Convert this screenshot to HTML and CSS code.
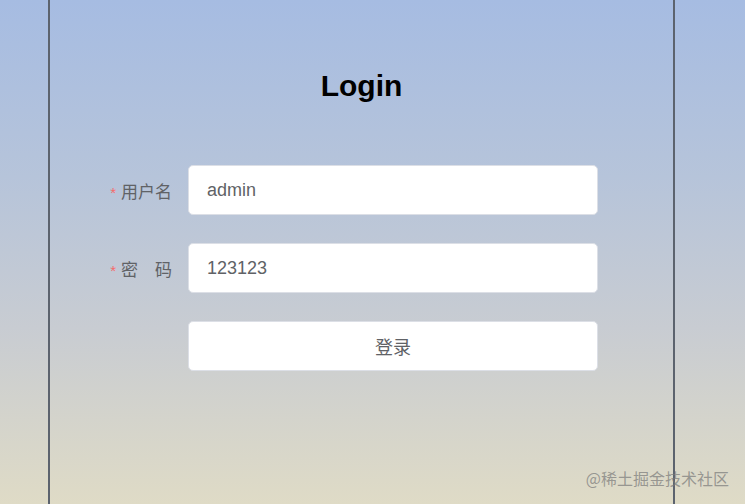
FILE: index.html
```html
<!DOCTYPE html>
<html lang="zh-CN">
<head>
    <meta charset="UTF-8">
    <meta name="viewport" content="width=device-width, initial-scale=1.0">
    <title>Login</title>
    <link rel="stylesheet" href="styles.css">
</head>
<body>
    <div class="login-box">
        <h1 class="login-title">Login</h1>
        <form class="login-form">
            <div class="form-item">
                <label class="form-label" for="username"><span class="required">*</span>用户名</label>
                <input class="form-input" id="username" type="text" value="admin">
            </div>
            <div class="form-item">
                <label class="form-label" for="password"><span class="required">*</span>密　码</label>
                <input class="form-input" id="password" type="text" value="123123">
            </div>
            <div class="form-item">
                <span class="form-label"></span>
                <button class="login-btn" type="button">登录</button>
            </div>
        </form>
    </div>

    <!-- Watermark -->
    <div class="watermark">@稀土掘金技术社区</div>
</body>
</html>
```

FILE: styles.css
```css
/* General Styles */
html, body {
    height: 100%;
}

body {
    margin: 0;
    font-family: "Liberation Sans", Arial, "Noto Sans CJK SC", sans-serif;
    background: linear-gradient(to bottom, #a6bce2 0%, #b6c4da 35%, #c8ccd2 65%, #dfdbc6 100%);
    overflow: hidden;
}

/* Login box */
.login-box {
    box-sizing: border-box;
    width: 627px;
    height: 100%;
    margin-left: 48px;
    border-left: 2px solid #5c636e;
    border-right: 2px solid #5c636e;
}

.login-title {
    margin: 0;
    padding-top: 69px;
    font-size: 30px;
    line-height: 34px;
    font-weight: bold;
    text-align: center;
    color: #000;
}

/* Form */
.login-form {
    margin-top: 62px;
    display: flex;
    flex-direction: column;
    gap: 28px;
}

.form-item {
    display: flex;
    align-items: center;
}

.form-label {
    box-sizing: border-box;
    width: 138px;
    padding-right: 16px;
    text-align: right;
    font-size: 17px;
    color: #606266;
    font-family: "Noto Sans CJK SC", sans-serif;
}

.required {
    color: #f56c6c;
    margin-right: 5px;
    font-family: "Liberation Sans", Arial, sans-serif;
    font-size: 15px;
}

.form-input,
.login-btn {
    box-sizing: border-box;
    width: 410px;
    height: 50px;
    border: 1px solid #dcdfe6;
    border-radius: 5px;
    background: #fff;
    color: #606266;
    font-size: 18px;
    font-family: "Liberation Sans", Arial, "Noto Sans CJK SC", sans-serif;
}

.form-input {
    padding: 0 18px;
    outline: none;
}

.login-btn {
    cursor: pointer;
    font-family: "Noto Sans CJK SC", sans-serif;
    font-size: 18px;
}

/* Watermark */
.watermark {
    position: absolute;
    right: 16px;
    bottom: 14px;
    font-size: 16px;
    color: rgba(120, 120, 120, 0.7);
    font-family: "Noto Sans CJK SC", sans-serif;
}
```
